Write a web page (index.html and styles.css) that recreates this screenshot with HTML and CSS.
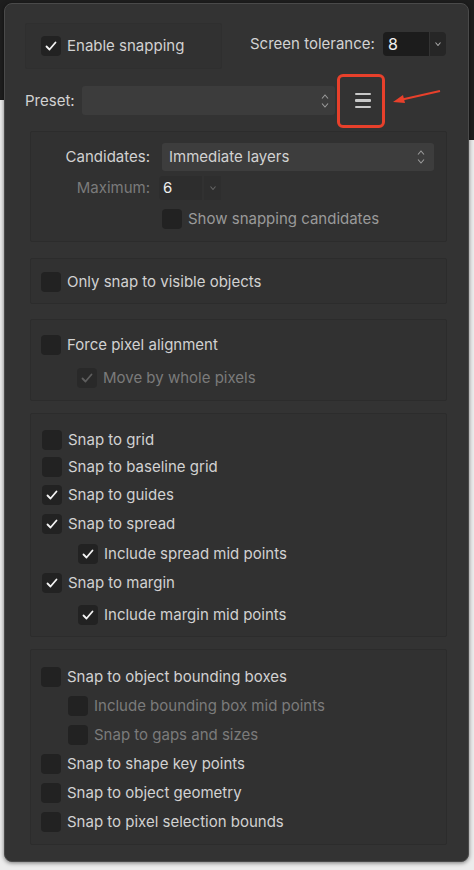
FILE: index.html
```html
<!DOCTYPE html>
<html>
<head>
<meta charset="utf-8">
<link rel="stylesheet" href="styles.css">
</head>
<body>
<div class="panel">
  <div class="top-row">
    <div class="group group-enable">
      <label class="check-row">
        <span class="cb checked"><svg viewBox="0 0 20 20"><polyline points="5.5,10.5 8.5,13.5 14.5,6.5"/></svg></span>
        <span class="txt">Enable snapping</span>
      </label>
    </div>
    <div class="tolerance">
      <span class="txt">Screen tolerance:</span>
      <div class="combo">
        <span class="combo-val">8</span>
        <span class="combo-btn"><svg viewBox="0 0 10 10"><polyline points="2.5,3.5 5,6.5 7.5,3.5"/></svg></span>
      </div>
    </div>
  </div>

  <div class="preset-row">
    <span class="txt">Preset:</span>
    <div class="preset-field">
      <svg class="stepper" viewBox="0 0 10 18"><polyline points="2,6.5 5,3 8,6.5"/><polyline points="2,11.5 5,15 8,11.5"/></svg>
    </div>
    <div class="menu-btn">
      <span class="bar"></span><span class="bar"></span><span class="bar"></span>
      <span class="highlight"></span>
    </div>
    <svg class="arrow" viewBox="0 0 50 16"><line x1="48" y1="2" x2="8" y2="11"/><polygon points="1,13 11,6 13,14"/></svg>
  </div>

  <div class="group group-cand">
    <div class="cand-grid">
      <span class="txt lbl">Candidates:</span>
      <div class="select">
        <span class="txt">Immediate layers</span>
        <svg class="stepper" viewBox="0 0 10 18"><polyline points="2,6.5 5,3 8,6.5"/><polyline points="2,11.5 5,15 8,11.5"/></svg>
      </div>
      <span class="txt lbl dim">Maximum:</span>
      <div class="combo small">
        <span class="combo-val dim">6</span>
        <span class="combo-btn"><svg viewBox="0 0 10 10"><polyline points="2.5,3.5 5,6.5 7.5,3.5"/></svg></span>
      </div>
      <span></span>
      <label class="check-row">
        <span class="cb"></span>
        <span class="txt soft">Show snapping candidates</span>
      </label>
    </div>
  </div>

  <div class="group group-visible">
    <label class="check-row">
      <span class="cb"></span>
      <span class="txt">Only snap to visible objects</span>
    </label>
  </div>

  <div class="group group-pixel">
    <label class="check-row">
      <span class="cb"></span>
      <span class="txt">Force pixel alignment</span>
    </label>
    <label class="check-row sub">
      <span class="cb checked disabled"><svg viewBox="0 0 20 20"><polyline points="5.5,10.5 8.5,13.5 14.5,6.5"/></svg></span>
      <span class="txt dim">Move by whole pixels</span>
    </label>
  </div>

  <div class="group group-grid">
    <label class="check-row">
      <span class="cb"></span>
      <span class="txt">Snap to grid</span>
    </label>
    <label class="check-row">
      <span class="cb"></span>
      <span class="txt">Snap to baseline grid</span>
    </label>
    <label class="check-row m1">
      <span class="cb checked"><svg viewBox="0 0 20 20"><polyline points="5.5,10.5 8.5,13.5 14.5,6.5"/></svg></span>
      <span class="txt">Snap to guides</span>
    </label>
    <label class="check-row m2">
      <span class="cb checked"><svg viewBox="0 0 20 20"><polyline points="5.5,10.5 8.5,13.5 14.5,6.5"/></svg></span>
      <span class="txt">Snap to spread</span>
    </label>
    <label class="check-row sub m3">
      <span class="cb checked"><svg viewBox="0 0 20 20"><polyline points="5.5,10.5 8.5,13.5 14.5,6.5"/></svg></span>
      <span class="txt">Include spread mid points</span>
    </label>
    <label class="check-row m2">
      <span class="cb checked"><svg viewBox="0 0 20 20"><polyline points="5.5,10.5 8.5,13.5 14.5,6.5"/></svg></span>
      <span class="txt">Snap to margin</span>
    </label>
    <label class="check-row sub m5">
      <span class="cb checked"><svg viewBox="0 0 20 20"><polyline points="5.5,10.5 8.5,13.5 14.5,6.5"/></svg></span>
      <span class="txt">Include margin mid points</span>
    </label>
  </div>

  <div class="group group-bbox">
    <label class="check-row">
      <span class="cb"></span>
      <span class="txt">Snap to object bounding boxes</span>
    </label>
    <label class="check-row sub2">
      <span class="cb"></span>
      <span class="txt dim">Include bounding box mid points</span>
    </label>
    <label class="check-row sub2">
      <span class="cb"></span>
      <span class="txt dim">Snap to gaps and sizes</span>
    </label>
    <label class="check-row">
      <span class="cb"></span>
      <span class="txt">Snap to shape key points</span>
    </label>
    <label class="check-row">
      <span class="cb"></span>
      <span class="txt">Snap to object geometry</span>
    </label>
    <label class="check-row">
      <span class="cb"></span>
      <span class="txt">Snap to pixel selection bounds</span>
    </label>
  </div>
</div>
</body>
</html>
```

FILE: styles.css
```css
* { box-sizing: border-box; }

html, body {
  margin: 0;
  padding: 0;
  height: 870px;
  overflow: hidden;
}

body {
  font-family: Inter, "Noto Sans", "Liberation Sans", sans-serif;
  font-size: 15px;
  color: #d2d2d2;
  background:
    linear-gradient(#1e1e1e, #1e1e1e) left top / 50% 100px no-repeat,
    linear-gradient(#1e1e1e, #1e1e1e) right top / 50% 140px no-repeat,
    #ececec;
  padding: 3px 5px 8px 4px;
}

.panel {
  width: 465px;
  height: 859px;
  background: #333333;
  border: 1px solid #4a4a4a;
  border-radius: 8px;
  box-shadow: 0 1px 4px rgba(0,0,0,0.5);
  padding: 19px 0 0 20px;
  display: flex;
  flex-direction: column;
}

.txt {
  white-space: nowrap;
  line-height: 20px;
}

.dim { color: #7b7b7b; }
.soft { color: #9a9a9a; }

.group {
  background: #313131;
  border: 1px solid #2c2c2c;
  border-radius: 2px;
  flex: none;
}

/* top row */
.top-row {
  display: flex;
  align-items: center;
  height: 46px;
  flex: none;
}

.group-enable {
  width: 197px;
  height: 46px;
  display: flex;
  align-items: center;
  padding-left: 15px;
  border-color: #2f2f2f;
}

.tolerance {
  display: flex;
  align-items: center;
  margin-left: 28px;
  margin-top: -4px;
}

.tolerance .txt { margin-right: 8px; }

.combo {
  display: flex;
  height: 24px;
  border-radius: 4px;
  overflow: hidden;
}

.combo-val {
  width: 46px;
  background: #1c1c1c;
  color: #f0f0f0;
  padding-left: 5px;
  line-height: 24px;
  font-size: 16px;
}

.combo-btn {
  width: 16px;
  margin-left: 1px;
  background: #262626;
  display: flex;
  align-items: center;
  justify-content: center;
}

.combo-btn svg {
  width: 10px;
  height: 10px;
  fill: none;
  stroke: #a8a8a8;
  stroke-width: 1.1;
}

.combo.small {
  height: 24px;
  margin-left: -3px;
}

.combo.small .combo-val {
  width: 43px;
  background: #2d2d2d;
  font-size: 15px;
  padding-left: 4px;
}

.combo.small .combo-btn {
  width: 17px;
  margin-left: 2px;
  background: #2e2e2e;
}

.combo.small .combo-btn svg { stroke: #666; }

/* preset */
.preset-row {
  position: relative;
  display: flex;
  align-items: center;
  height: 29px;
  margin-top: 17px;
  flex: none;
}

.preset-row > .txt { width: 57px; }

.preset-field {
  width: 253px;
  height: 29px;
  background: #3c3c3c;
  border-radius: 3px;
  display: flex;
  align-items: center;
  justify-content: flex-end;
  padding-right: 5px;
}

.stepper {
  width: 10px;
  height: 18px;
  fill: none;
  stroke: #9c9c9c;
  stroke-width: 1.1;
}

.menu-btn {
  position: relative;
  width: 35px;
  height: 29px;
  margin-left: 10px;
  display: flex;
  flex-direction: column;
  align-items: center;
  justify-content: center;
  gap: 4px;
}

.bar {
  display: block;
  width: 16px;
  height: 2.6px;
  background: #c8c8c8;
  border-radius: 1px;
}

.highlight {
  position: absolute;
  left: -8px;
  top: -12px;
  width: 48px;
  height: 54px;
  border: 3px solid #e8402b;
  border-radius: 6px;
}

.arrow {
  position: absolute;
  left: 367px;
  top: 3px;
  width: 50px;
  height: 16px;
}

.arrow line {
  stroke: #e8402b;
  stroke-width: 2;
}

.arrow polygon { fill: #e8402b; }

/* check rows */
.check-row {
  display: flex;
  align-items: center;
  height: 20px;
  gap: 6px;
}

.cb {
  width: 20px;
  height: 20px;
  flex: none;
  border-radius: 4px;
  background: #222222;
  display: flex;
  align-items: center;
  justify-content: center;
}

.cb svg {
  width: 20px;
  height: 20px;
  fill: none;
  stroke: #f4f4f4;
  stroke-width: 1.8;
  stroke-linecap: round;
  stroke-linejoin: round;
}

.cb.disabled { background: #292929; }
.cb.disabled svg { stroke: #5e5e5e; }

/* candidates */
.group-cand {
  width: 417px;
  margin-left: 5px;
  margin-top: 16px;
  height: 111px;
  padding-top: 11px;
}

.cand-grid {
  display: grid;
  grid-template-columns: 119px 272px;
  column-gap: 12px;
  row-gap: 5px;
  align-items: center;
}

.lbl { text-align: right; }

.select {
  height: 28px;
  background: #3d3d3d;
  border-radius: 3px;
  display: flex;
  align-items: center;
  justify-content: space-between;
  padding: 0 8px 0 7px;
}

.cand-grid .check-row { margin-top: 4px; }

/* visible */
.group-visible {
  width: 417px;
  margin-left: 5px;
  margin-top: 16px;
  height: 46px;
  padding: 13px 0 0 10px;
}

/* pixel */
.group-pixel {
  width: 417px;
  margin-left: 5px;
  margin-top: 15px;
  height: 82px;
  padding: 15px 0 0 10px;
  display: flex;
  flex-direction: column;
  gap: 13px;
}

.check-row.sub { margin-left: 36px; }
.check-row.sub2 { margin-left: 27px; }

/* grid */
.group-grid {
  width: 417px;
  margin-left: 5px;
  margin-top: 12px;
  height: 224px;
  padding: 16px 0 0 11px;
  display: flex;
  flex-direction: column;
  gap: 7px;
}

.check-row.m1 { margin-top: 1px; }
.check-row.m2 { margin-top: 2px; }
.check-row.m3 { margin-top: 3px; }
.check-row.m5 { margin-top: 5px; }

/* bbox */
.group-bbox {
  width: 417px;
  margin-left: 5px;
  margin-top: 12px;
  height: 196px;
  padding: 17px 0 0 10px;
  display: flex;
  flex-direction: column;
  gap: 9px;
}
```
